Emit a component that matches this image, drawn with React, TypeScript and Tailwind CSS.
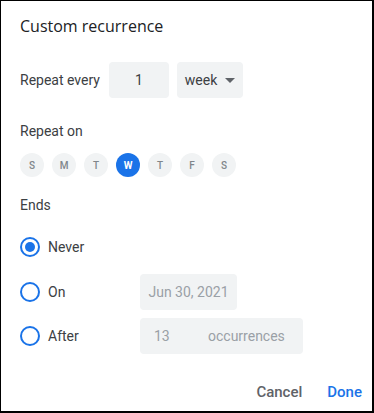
const days = ["S", "M", "T", "W", "T", "F", "S"];

function Radio({ checked }: { checked?: boolean }) {
    return (
        <span className="flex h-5 w-5 items-center justify-center rounded-full border-2 border-[#1a73e8]">
            {checked && <span className="h-2.5 w-2.5 rounded-full bg-[#1a73e8]" />}
        </span>
    );
}

export default function App() {
    return (
        <div
            className="h-[413px] w-[374px] border border-r-2 border-b-2 border-black bg-white text-[#3c4043]"
            style={{ fontFamily: "Roboto, 'Liberation Sans', sans-serif" }}
        >
            <div className="px-[19px] pt-[14px]">
                <h1 className="text-[16px] font-medium leading-[22px] text-[#202124]" style={{ fontFamily: "'Open Sans', Roboto, sans-serif" }}>
                    Custom recurrence
                </h1>
                <div className="mt-[25px] flex items-center text-[14px]">
                    <span className="w-[89px]">Repeat every</span>
                    <div className="flex h-9 w-[60px] items-center justify-center rounded bg-[#f1f3f4]">1</div>
                    <div className="ml-2 flex h-9 w-[66px] items-center justify-center gap-2 rounded bg-[#f1f3f4]">
                        week
                        <span className="h-0 w-0 border-x-[5px] border-t-[5px] border-x-transparent border-t-[#5f6368]" />
                    </div>
                </div>
                <p className="mt-[23px] text-[14px] leading-5">Repeat on</p>
                <div className="mt-3 flex gap-2">
                    {days.map((d, i) => (
                        <span
                            key={i}
                            className={
                                i === 3
                                    ? "flex h-6 w-6 items-center justify-center rounded-full bg-[#1a73e8] text-[10px] font-bold text-white"
                                    : "flex h-6 w-6 items-center justify-center rounded-full bg-[#f1f3f4] text-[10px] font-medium text-[#80868b]"
                            }
                        >
                            {d}
                        </span>
                    ))}
                </div>
                <p className="mt-[18px] text-[14px] leading-5">Ends</p>
                <div className="mt-[22px] flex h-5 items-center gap-2 text-[14px]">
                    <Radio checked />
                    <span>Never</span>
                </div>
                <div className="mt-[17px] flex items-center text-[14px]">
                    <div className="flex w-[120px] items-center gap-2">
                        <Radio />
                        <span>On</span>
                    </div>
                    <div className="flex h-9 w-[97px] items-center justify-center rounded bg-[#f1f3f4] text-[#9aa0a6]">
                        Jun 30, 2021
                    </div>
                </div>
                <div className="mt-2 flex items-center text-[14px]">
                    <div className="flex w-[120px] items-center gap-2">
                        <Radio />
                        <span>After</span>
                    </div>
                    <div className="flex h-9 w-[163px] items-center rounded bg-[#f1f3f4] pl-[14px] text-[#9aa0a6]">
                        <span className="w-[54px]">13</span>
                        <span>occurrences</span>
                    </div>
                </div>
            </div>
            <div className="mt-[27px] flex justify-end gap-[25px] pr-[10px] text-[15px] font-medium">
                <span className="text-[#5f6368]">Cancel</span>
                <span className="text-[#1a73e8]">Done</span>
            </div>
        </div>
    );
}
